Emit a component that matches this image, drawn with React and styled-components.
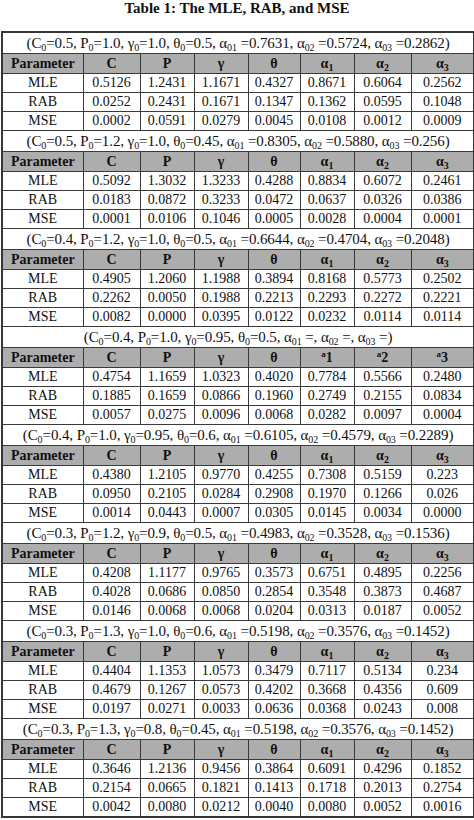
import styled, { createGlobalStyle } from "styled-components";

const GlobalStyle = createGlobalStyle`
  html, body {
    margin: 0;
    padding: 0;
    background: #ffffff;
  }
  body {
    font-family: "Liberation Serif", "Times New Roman", serif;
    color: #111;
  }
`;

const Page = styled.div`
  width: 474px;
`;

const Title = styled.h1`
  margin: 0 0 13px;
  height: 18px;
  line-height: 16px;
  text-align: center;
  font-size: 15px;
  font-weight: bold;
  color: #111;
`;

const Table = styled.table`
  width: 472px;
  margin: 0 1px;
  border-collapse: collapse;
  table-layout: fixed;
  border: 2px solid #363636;
  font-family: "Liberation Serif", "Times New Roman", serif;
  font-size: 14px;
  color: #111;
`;

const CaptionCell = styled.td`
  height: 20px;
  padding: 0;
  line-height: 16px;
  font-size: 15px;
  text-align: center;
  border: 1px solid #3a3a3a;
  background: #fff;
  white-space: nowrap;
  letter-spacing: -0.1px;
`;

const HeadCell = styled.th`
  height: 19px;
  padding: 0;
  line-height: 16px;
  text-align: center;
  font-weight: bold;
  background: #adadad;
  border: 1px solid #3a3a3a;
`;

const Cell = styled.td`
  height: 18px;
  padding: 0;
  line-height: 16px;
  text-align: center;
  border: 1px solid #3a3a3a;
  background: #fff;
`;

const Sub = styled.sub`
  font-size: 10px;
  line-height: 0;
  vertical-align: -3px;
`;

const Sup = styled.sup`
  font-size: 9px;
  line-height: 0;
  vertical-align: 5px;
`;

const widths = [81, 57, 54, 54, 52, 54, 57, 63];

const groups = [
  {
    p: ["0.5", "1.0", "1.0", "0.5", "0.7631", "0.5724", "0.2862"],
    rows: [
      ["MLE", "0.5126", "1.2431", "1.1671", "0.4327", "0.8671", "0.6064", "0.2562"],
      ["RAB", "0.0252", "0.2431", "0.1671", "0.1347", "0.1362", "0.0595", "0.1048"],
      ["MSE", "0.0002", "0.0591", "0.0279", "0.0045", "0.0108", "0.0012", "0.0009"],
    ],
  },
  {
    p: ["0.5", "1.2", "1.0", "0.45", "0.8305", "0.5880", "0.256"],
    rows: [
      ["MLE", "0.5092", "1.3032", "1.3233", "0.4288", "0.8834", "0.6072", "0.2461"],
      ["RAB", "0.0183", "0.0872", "0.3233", "0.0472", "0.0637", "0.0326", "0.0386"],
      ["MSE", "0.0001", "0.0106", "0.1046", "0.0005", "0.0028", "0.0004", "0.0001"],
    ],
  },
  {
    p: ["0.4", "1.2", "1.0", "0.5", "0.6644", "0.4704", "0.2048"],
    rows: [
      ["MLE", "0.4905", "1.2060", "1.1988", "0.3894", "0.8168", "0.5773", "0.2502"],
      ["RAB", "0.2262", "0.0050", "0.1988", "0.2213", "0.2293", "0.2272", "0.2221"],
      ["MSE", "0.0082", "0.0000", "0.0395", "0.0122", "0.0232", "0.0114", "0.0114"],
    ],
  },
  {
    p: ["0.4", "1.0", "0.95", "0.5", "", "", ""],
    plainAlpha: true,
    rows: [
      ["MLE", "0.4754", "1.1659", "1.0323", "0.4020", "0.7784", "0.5566", "0.2480"],
      ["RAB", "0.1885", "0.1659", "0.0866", "0.1960", "0.2749", "0.2155", "0.0834"],
      ["MSE", "0.0057", "0.0275", "0.0096", "0.0068", "0.0282", "0.0097", "0.0004"],
    ],
  },
  {
    p: ["0.4", "1.0", "0.95", "0.6", "0.6105", "0.4579", "0.2289"],
    rows: [
      ["MLE", "0.4380", "1.2105", "0.9770", "0.4255", "0.7308", "0.5159", "0.223"],
      ["RAB", "0.0950", "0.2105", "0.0284", "0.2908", "0.1970", "0.1266", "0.026"],
      ["MSE", "0.0014", "0.0443", "0.0007", "0.0305", "0.0145", "0.0034", "0.0000"],
    ],
  },
  {
    p: ["0.3", "1.2", "0.9", "0.5", "0.4983", "0.3528", "0.1536"],
    rows: [
      ["MLE", "0.4208", "1.1177", "0.9765", "0.3573", "0.6751", "0.4895", "0.2256"],
      ["RAB", "0.4028", "0.0686", "0.0850", "0.2854", "0.3548", "0.3873", "0.4687"],
      ["MSE", "0.0146", "0.0068", "0.0068", "0.0204", "0.0313", "0.0187", "0.0052"],
    ],
  },
  {
    p: ["0.3", "1.3", "1.0", "0.6", "0.5198", "0.3576", "0.1452"],
    rows: [
      ["MLE", "0.4404", "1.1353", "1.0573", "0.3479", "0.7117", "0.5134", "0.234"],
      ["RAB", "0.4679", "0.1267", "0.0573", "0.4202", "0.3668", "0.4356", "0.609"],
      ["MSE", "0.0197", "0.0271", "0.0033", "0.0636", "0.0368", "0.0243", "0.008"],
    ],
  },
  {
    p: ["0.3", "1.3", "0.8", "0.45", "0.5198", "0.3576", "0.1452"],
    rows: [
      ["MLE", "0.3646", "1.2136", "0.9456", "0.3864", "0.6091", "0.4296", "0.1852"],
      ["RAB", "0.2154", "0.0665", "0.1821", "0.1413", "0.1718", "0.2013", "0.2754"],
      ["MSE", "0.0042", "0.0080", "0.0212", "0.0040", "0.0080", "0.0052", "0.0016"],
    ],
  },
];

function Caption({ p }) {
  const [c, pp, g, t, a1, a2, a3] = p;
  return (
    <CaptionCell colSpan={8}>
      (C<Sub>0</Sub>={c}, P<Sub>0</Sub>={pp}, γ<Sub>0</Sub>={g}, θ<Sub>0</Sub>={t}, α
      <Sub>01</Sub> ={a1}, α<Sub>02</Sub> ={a2}, α<Sub>03</Sub> ={a3})
    </CaptionCell>
  );
}

function HeaderRow({ plainAlpha }) {
  const alpha = (n) =>
    plainAlpha ? (
      <>
        <Sup>a</Sup>
        {n}
      </>
    ) : (
      <>
        α<Sub>{n}</Sub>
      </>
    );
  return (
    <tr>
      <HeadCell>Parameter</HeadCell>
      <HeadCell>C</HeadCell>
      <HeadCell>P</HeadCell>
      <HeadCell>γ</HeadCell>
      <HeadCell>θ</HeadCell>
      <HeadCell>{alpha(1)}</HeadCell>
      <HeadCell>{alpha(2)}</HeadCell>
      <HeadCell>{alpha(3)}</HeadCell>
    </tr>
  );
}

function Group({ grp }) {
  return (
    <>
      <tr>
        <Caption p={grp.p} />
      </tr>
      <HeaderRow plainAlpha={grp.plainAlpha} />
      {grp.rows.map((r) => (
        <tr key={r[0]}>
          {r.map((v, i) => (
            <Cell key={i}>{v}</Cell>
          ))}
        </tr>
      ))}
    </>
  );
}

export default function App() {
  return (
    <Page>
      <GlobalStyle />
      <Title>Table 1: The MLE, RAB, and MSE</Title>
      <Table>
        <colgroup>
          {widths.map((w, i) => (
            <col key={i} style={{ width: w }} />
          ))}
        </colgroup>
        <tbody>
          {groups.map((grp, gi) => (
            <Group key={gi} grp={grp} />
          ))}
        </tbody>
      </Table>
    </Page>
  );
}
